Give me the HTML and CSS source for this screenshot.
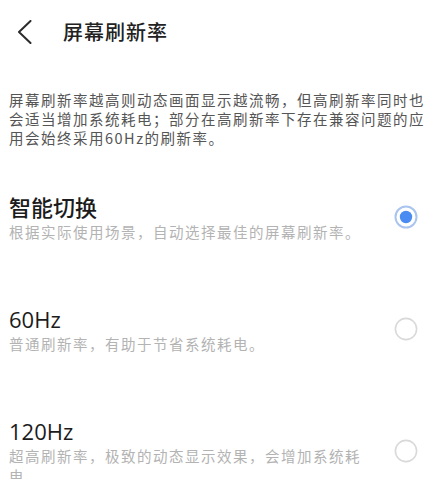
FILE: index.html
```html
<!DOCTYPE html>
<html lang="zh-CN">
<head>
<meta charset="utf-8">
<title>屏幕刷新率</title>
<link rel="stylesheet" href="styles.css">
</head>
<body>
<div class="page">
  <header class="header">
    <svg class="back" width="15" height="24" viewBox="0 0 15 24"><path d="M13.5 1 L2 12 L13.5 23" fill="none" stroke="#2b2b2b" stroke-width="2" stroke-linecap="round" stroke-linejoin="round"/></svg>
    <h1 class="title">屏幕刷新率</h1>
  </header>
  <p class="desc">屏幕刷新率越高则动态画面显示越流畅，但高刷新率同时也会适当增加系统耗电；部分在高刷新率下存在兼容问题的应用会始终采用60Hz的刷新率。</p>
  <div class="list">
    <div class="row">
      <div class="text">
        <div class="name">智能切换</div>
        <div class="sub">根据实际使用场景，自动选择最佳的屏幕刷新率。</div>
      </div>
      <svg class="radio" width="24" height="24" viewBox="0 0 24 24"><circle cx="12" cy="12" r="10.5" fill="none" stroke="#a9c4ee" stroke-width="2"/><circle cx="12" cy="12" r="6.2" fill="#4a8cf2"/></svg>
    </div>
    <div class="row">
      <div class="text">
        <div class="name">60Hz</div>
        <div class="sub">普通刷新率，有助于节省系统耗电。</div>
      </div>
      <svg class="radio" width="24" height="24" viewBox="0 0 24 24"><circle cx="12" cy="12" r="10.6" fill="none" stroke="#d9d9d9" stroke-width="1.6"/></svg>
    </div>
    <div class="row">
      <div class="text">
        <div class="name">120Hz</div>
        <div class="sub">超高刷新率，极致的动态显示效果，会增加系统耗电。</div>
      </div>
      <svg class="radio" width="24" height="24" viewBox="0 0 24 24"><circle cx="12" cy="12" r="10.6" fill="none" stroke="#d9d9d9" stroke-width="1.6"/></svg>
    </div>
  </div>
</div>
</body>
</html>
```

FILE: styles.css
```css
html, body {
  margin: 0;
  padding: 0;
  overflow: hidden;
  background: #ffffff;
}

body {
  font-family: "Noto Sans CJK SC", "Noto Sans", sans-serif;
  color: #222222;
}

.page {
  width: 424px;
  height: 479px;
  overflow: hidden;
}

.header {
  height: 63px;
  display: flex;
  align-items: center;
  padding-left: 17px;
  gap: 31px;
}

.back {
  display: block;
  flex: none;
}

.title {
  margin: 0;
  font-size: 20px;
  font-weight: 500;
  letter-spacing: 1px;
  line-height: 28px;
  color: #222222;
}

.desc {
  margin: 27px -6px 14px 9px;
  font-size: 14.5px;
  line-height: 19px;
  letter-spacing: 1.5px;
  color: #555555;
}

.row {
  display: flex;
  align-items: center;
  padding: 31px 6px 31px 9px;
}

.text {
  width: 360px;
  flex: none;
}

.name {
  font-family: "Open Sans", "Noto Sans CJK SC", sans-serif;
  font-size: 22px;
  font-weight: 500;
  line-height: 30px;
  color: #1c1c1c;
}

.sub {
  font-size: 14.5px;
  line-height: 20px;
  letter-spacing: 1.5px;
  color: #b3b3b3;
}

.radio {
  display: block;
  flex: none;
  margin-left: auto;
}
```
